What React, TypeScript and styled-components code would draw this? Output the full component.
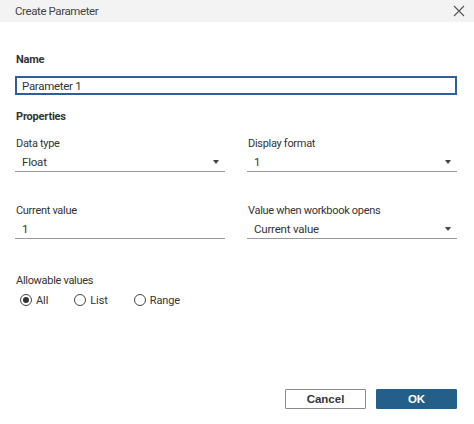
import React from "react";
import styled, { createGlobalStyle } from "styled-components";

const Global = createGlobalStyle`
  html, body { margin: 0; padding: 0; background: #fff; }
  body { font-family: Roboto, "Liberation Sans", Arial, sans-serif; color: #333; }
  * { box-sizing: border-box; }
`;

const Dialog = styled.div`
  width: 474px;
  height: 424px;
  display: flex;
  flex-direction: column;
  background: #fff;
`;

const TitleBar = styled.div`
  height: 22px;
  background: #f3f3f3;
  display: flex;
  align-items: center;
  justify-content: space-between;
  padding: 0 8px 0 15px;
  font-size: 11.5px;
  letter-spacing: -0.4px;
  color: #444;
`;

const CloseButton = styled.button`
  border: none;
  background: transparent;
  padding: 0;
  width: 14px;
  height: 14px;
  display: flex;
  align-items: center;
  justify-content: center;
  cursor: pointer;
`;

const Body = styled.div`
  flex: 1;
  display: flex;
  flex-direction: column;
  padding: 0 17px 15px 15px;
`;

const SectionTitle = styled.div<{ $top: number }>`
  margin-top: ${(p) => p.$top}px;
  padding-left: 1px;
  font-size: 11px;
  font-weight: 700;
  letter-spacing: -0.2px;
  color: #333;
  line-height: 14px;
`;

const NameInput = styled.input`
  margin-top: 9px;
  height: 19px;
  width: 100%;
  border: 2px solid #2f5f9b;
  padding: 0 5px;
  font-family: inherit;
  font-size: 11.5px;
  letter-spacing: -0.3px;
  color: #333;
  outline: none;
`;

const Grid = styled.div`
  margin-top: 13px;
  display: grid;
  grid-template-columns: 1fr 1fr;
  column-gap: 22px;
  row-gap: 32px;
`;

const Field = styled.div`
  display: flex;
  flex-direction: column;
`;

const Label = styled.div`
  padding-left: 1px;
  font-size: 11px;
  letter-spacing: -0.3px;
  line-height: 14px;
  color: #333;
`;

const ValueBox = styled.div`
  margin-top: 3px;
  height: 18px;
  display: flex;
  align-items: center;
  justify-content: space-between;
  padding: 0 6px 1px 7px;
  border-bottom: 1.5px solid #9a9a9a;
  font-size: 11.5px;
  letter-spacing: -0.2px;
  color: #333;
`;

const Caret = styled.span`
  width: 0;
  height: 0;
  border-left: 3.5px solid transparent;
  border-right: 3.5px solid transparent;
  border-top: 4px solid #444;
`;

const Allowable = styled.div`
  margin-top: 35px;
  display: flex;
  flex-direction: column;
`;

const RadioRow = styled.div`
  margin-top: 5px;
  height: 14px;
  display: flex;
  align-items: center;
  gap: 26px;
  padding-left: 5px;
`;

const RadioOption = styled.label`
  display: flex;
  align-items: center;
  gap: 4px;
  font-size: 11px;
  letter-spacing: -0.1px;
  color: #333;
`;

const RadioCircle = styled.span<{ $checked?: boolean }>`
  width: 12px;
  height: 12px;
  border-radius: 50%;
  border: 1px solid #444;
  display: flex;
  align-items: center;
  justify-content: center;
  &::after {
    content: "";
    width: 6px;
    height: 6px;
    border-radius: 50%;
    background: ${(p) => (p.$checked ? "#333" : "transparent")};
  }
`;

const Footer = styled.div`
  margin-top: auto;
  display: flex;
  justify-content: flex-end;
  gap: 10px;
`;

const Button = styled.button<{ $primary?: boolean }>`
  width: 81px;
  height: 20px;
  font-family: "Liberation Sans", Arial, sans-serif;
  font-weight: 700;
  font-size: 11.5px;
  border-radius: 1px;
  border: 1px solid ${(p) => (p.$primary ? "#245f8a" : "#8a8a8a")};
  background: ${(p) => (p.$primary ? "#245f8a" : "#fff")};
  color: ${(p) => (p.$primary ? "#fff" : "#333")};
  padding: 0;
`;

export default function App() {
  return (
    <>
      <Global />
      <Dialog>
        <TitleBar>
          <span>Create Parameter</span>
          <CloseButton aria-label="Close">
            <svg width="12" height="12" viewBox="0 0 12 12">
              <path d="M1 1L11 11M11 1L1 11" stroke="#555" strokeWidth="1.1" />
            </svg>
          </CloseButton>
        </TitleBar>
        <Body>
          <SectionTitle $top={31}>Name</SectionTitle>
          <NameInput defaultValue="Parameter 1" />
          <SectionTitle $top={15}>Properties</SectionTitle>
          <Grid>
            <Field>
              <Label>Data type</Label>
              <ValueBox>
                <span>Float</span>
                <Caret />
              </ValueBox>
            </Field>
            <Field>
              <Label>Display format</Label>
              <ValueBox>
                <span>1</span>
                <Caret />
              </ValueBox>
            </Field>
            <Field>
              <Label>Current value</Label>
              <ValueBox>
                <span>1</span>
              </ValueBox>
            </Field>
            <Field>
              <Label>Value when workbook opens</Label>
              <ValueBox>
                <span>Current value</span>
                <Caret />
              </ValueBox>
            </Field>
          </Grid>
          <Allowable>
            <Label>Allowable values</Label>
            <RadioRow>
              <RadioOption>
                <RadioCircle $checked />
                All
              </RadioOption>
              <RadioOption>
                <RadioCircle />
                List
              </RadioOption>
              <RadioOption>
                <RadioCircle />
                Range
              </RadioOption>
            </RadioRow>
          </Allowable>
          <Footer>
            <Button>Cancel</Button>
            <Button $primary>OK</Button>
          </Footer>
        </Body>
      </Dialog>
    </>
  );
}
